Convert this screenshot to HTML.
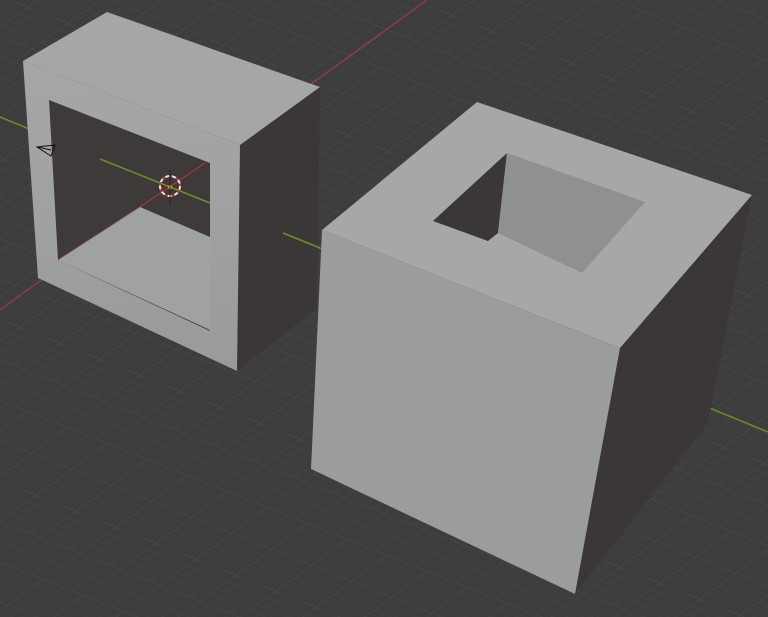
<!DOCTYPE html>
<html><head><meta charset="utf-8"><style>html,body{margin:0;padding:0;background:#3d3d3d;overflow:hidden}svg{display:block}</style></head>
<body>
<svg width="768" height="617" viewBox="0 0 768 617" xmlns="http://www.w3.org/2000/svg">
<defs>
<pattern id="g" width="40" height="40" patternUnits="userSpaceOnUse" patternTransform="matrix(1,0.4,-0.9,0.65,0,117)">
<path d="M0 0H40M0 0V40" stroke="#4b4b4b" stroke-width="1.2" fill="none"/>
<path d="M0 10H40M0 20H40M0 30H40M10 0V40M20 0V40M30 0V40" stroke="#424242" stroke-width="0.8" fill="none"/>
</pattern>
<linearGradient id="lf" x1="0" y1="0" x2="0" y2="1"><stop offset="0" stop-color="#a6a7a8"/><stop offset="1" stop-color="#999a9b"/></linearGradient>
</defs>
<rect width="768" height="617" fill="#3d3d3d"/>
<rect width="768" height="617" fill="url(#g)"/>
<line x1="0" y1="310" x2="427" y2="0" stroke="#9a3a44" stroke-width="1.3"/>
<line x1="0" y1="117" x2="768" y2="432" stroke="#6c8f2a" stroke-width="1.5"/>

<!-- left box -->
<polygon points="240,145 320,87 317,308 237,371" fill="#3b3737"/>
<line x1="283" y1="233" x2="320" y2="248" stroke="#6c8f2a" stroke-width="1.5"/>
<polygon points="23,61 107,12 320,87 240,145" fill="#a5a6a7"/>
<polygon points="49,100 210,163 210,237 140,207 58,260" fill="#3e3a3a"/>
<line x1="100" y1="159" x2="210" y2="203" stroke="#6c8f2a" stroke-width="1.5"/>
<line x1="140" y1="207" x2="205" y2="163" stroke="#9a3a44" stroke-width="1.3"/>
<polygon points="58,260 140,207 210,237 210,330" fill="#a0a1a2"/>
<line x1="58" y1="260" x2="140" y2="207" stroke="#b05a62" stroke-width="1" opacity="0.6"/>
<path d="M23,61 L240,145 L237,371 L38,278 Z M49,100 L58,260 L210,331 L210,163 Z" fill="url(#lf)" fill-rule="evenodd"/>
<circle cx="170" cy="186" r="10" fill="none" stroke="#e8e8e8" stroke-width="2" stroke-dasharray="4 3"/>
<circle cx="170" cy="186" r="10" fill="none" stroke="#c33" stroke-width="2" stroke-dasharray="3 4" stroke-dashoffset="3"/>
<circle cx="170" cy="187" r="2" fill="#f39c12"/>
<line x1="170" y1="170" x2="170" y2="205" stroke="#222" stroke-width="1"/>
<path d="M37,147 L55,145 L51,156 Z M37,147 L51,150" fill="none" stroke="#111" stroke-width="1"/>

<!-- right box -->
<polygon points="620,348 752,195 708,423 575,594" fill="#3b3737"/>
<polygon points="322,230 620,348 575,594 311,469" fill="#9b9c9d"/>
<polygon points="322,230 477,102 752,195 620,348" fill="#a6a7a8"/>
<polygon points="433,221 507,153 498,233 488,241" fill="#3b3737"/>
<polygon points="507,153 645,202 582,273 498,233" fill="#8f9091"/>
</svg>
</body></html>
